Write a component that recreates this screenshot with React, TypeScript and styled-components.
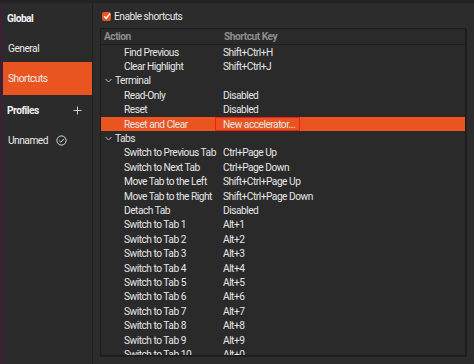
import { createGlobalStyle, styled } from 'styled-components';

const GlobalStyle = createGlobalStyle`
  html, body {
    margin: 0;
    padding: 0;
    background: #1e1e1e;
  }
  body {
    font-family: Roboto, 'Noto Sans', 'Liberation Sans', sans-serif;
  }
`;

const Window = styled.div`
  width: 474px;
  height: 364px;
  display: flex;
  overflow: hidden;
  background: #2c2c2c;
  border-top: 3px solid #232323;
  box-sizing: border-box;
  color: #e6e6e6;
  font-size: 10.2px;
  letter-spacing: -0.5px;
`;

const Desktop = styled.div`
  width: 3px;
  background: #3a2136;
`;

const Sidebar = styled.nav`
  width: 89px;
  flex-shrink: 0;
  background: #2b2b2b;
  border-right: 1px solid #1f1f1f;
  display: flex;
  flex-direction: column;
  padding-top: 6px;
`;

const SideHeading = styled.div<{ $h: number }>`
  display: flex;
  align-items: center;
  justify-content: space-between;
  height: ${(p) => p.$h}px;
  padding: 0 10px 0 4px;
  font-weight: 700;
  color: #f2f2f2;
`;

const SideItem = styled.div<{ $active?: boolean; $h: number; $top?: number }>`
  display: flex;
  align-items: center;
  gap: 8px;
  height: ${(p) => p.$h}px;
  box-sizing: border-box;
  padding-left: 5px;
  padding-top: ${(p) => p.$top ?? 0}px;
  background: ${(p) => (p.$active ? '#e95420' : 'transparent')};
  color: #ececec;
`;

const Main = styled.main`
  flex: 1;
  display: flex;
  flex-direction: column;
  padding: 6px 8px 8px 7px;
  gap: 5px;
`;

const CheckRow = styled.label`
  display: flex;
  align-items: center;
  gap: 3px;
  height: 14px;
  padding-left: 2px;
`;

const Box = styled.span`
  width: 9px;
  height: 9px;
  border-radius: 2px;
  background: #e95420;
  display: flex;
  align-items: center;
  justify-content: center;
`;

const Tree = styled.div`
  flex: 1;
  border: 1px solid #1c1c1c;
  background: #2a2a2a;
  overflow: hidden;
  box-shadow: 1px 1px 0 #202020;
`;

const HeaderRow = styled.div`
  display: grid;
  grid-template-columns: 120px 1fr;
  height: 15px;
  align-items: center;
  padding-left: 3px;
  border-bottom: 1px solid #1f1f1f;
  font-weight: 700;
  color: #8e8e8e;
`;

const Row = styled.div<{ $selected?: boolean }>`
  display: grid;
  grid-template-columns: 120px 1fr;
  height: 14.4px;
  align-items: center;
  padding-left: 3px;
  background: ${(p) => (p.$selected ? '#e95420' : 'transparent')};
  white-space: nowrap;
`;

const ActionCell = styled.span<{ $depth: number }>`
  display: flex;
  align-items: center;
  gap: 3px;
  padding-left: ${(p) => (p.$depth ? '20px' : '1px')};
`;

const KeyCell = styled.span<{ $editing?: boolean }>`
  justify-self: start;
  margin-left: -9px;
  padding: 0 5px 0 8px;
  height: 14px;
  display: flex;
  align-items: center;
  outline: ${(p) => (p.$editing ? '1.5px solid #ff1a1a' : 'none')};
  outline-offset: -1px;
`;

const Chevron = () => (
  <svg width="7" height="5" viewBox="0 0 7 5">
    <path d="M0.5 1 L3.5 4 L6.5 1" fill="none" stroke="#bdbdbd" strokeWidth="1" />
  </svg>
);

const Check = () => (
  <svg width="8" height="8" viewBox="0 0 8 8">
    <path d="M1 4.2 L3.2 6.3 L7 1.6" fill="none" stroke="#fff" strokeWidth="1.5" />
  </svg>
);

const CircleCheck = () => (
  <svg width="11" height="11" viewBox="0 0 11 11">
    <circle cx="5.5" cy="5.5" r="4.6" fill="none" stroke="#dcdcdc" strokeWidth="1" />
    <path d="M3.2 5.6 L4.9 7.2 L7.9 3.9" fill="none" stroke="#dcdcdc" strokeWidth="1" />
  </svg>
);

const Plus = () => (
  <svg width="9" height="9" viewBox="0 0 9 9">
    <path d="M4.5 0.5 V8.5 M0.5 4.5 H8.5" stroke="#cfcfcf" strokeWidth="1" />
  </svg>
);

type Item = { name: string; key?: string; group?: boolean; selected?: boolean };

const items: Item[] = [
  { name: 'Find Previous', key: 'Shift+Ctrl+H' },
  { name: 'Clear Highlight', key: 'Shift+Ctrl+J' },
  { name: 'Terminal', group: true },
  { name: 'Read-Only', key: 'Disabled' },
  { name: 'Reset', key: 'Disabled' },
  { name: 'Reset and Clear', key: 'New accelerator...', selected: true },
  { name: 'Tabs', group: true },
  { name: 'Switch to Previous Tab', key: 'Ctrl+Page Up' },
  { name: 'Switch to Next Tab', key: 'Ctrl+Page Down' },
  { name: 'Move Tab to the Left', key: 'Shift+Ctrl+Page Up' },
  { name: 'Move Tab to the Right', key: 'Shift+Ctrl+Page Down' },
  { name: 'Detach Tab', key: 'Disabled' },
  ...Array.from({ length: 10 }, (_, i) => ({
    name: `Switch to Tab ${i + 1}`,
    key: `Alt+${(i + 1) % 10}`,
  })),
];

export default function App() {
  return (
    <>
      <GlobalStyle />
      <Window>
        <Desktop />
        <Sidebar>
          <SideHeading $h={18}>Global</SideHeading>
          <SideItem $h={35} $top={7}>General</SideItem>
          <SideItem $active $h={33}>Shortcuts</SideItem>
          <SideHeading $h={30}>
            Profiles
            <Plus />
          </SideHeading>
          <SideItem $h={30}>
            Unnamed
            <CircleCheck />
          </SideItem>
        </Sidebar>
        <Main>
          <CheckRow>
            <Box>
              <Check />
            </Box>
            Enable shortcuts
          </CheckRow>
          <Tree>
            <HeaderRow>
              <span>Action</span>
              <span>Shortcut Key</span>
            </HeaderRow>
            {items.map((it) => (
              <Row key={it.name} $selected={it.selected}>
                <ActionCell $depth={it.group ? 0 : 1}>
                  {it.group && <Chevron />}
                  {it.name}
                </ActionCell>
                {it.key && <KeyCell $editing={it.selected}>{it.key}</KeyCell>}
              </Row>
            ))}
          </Tree>
        </Main>
      </Window>
    </>
  );
}
